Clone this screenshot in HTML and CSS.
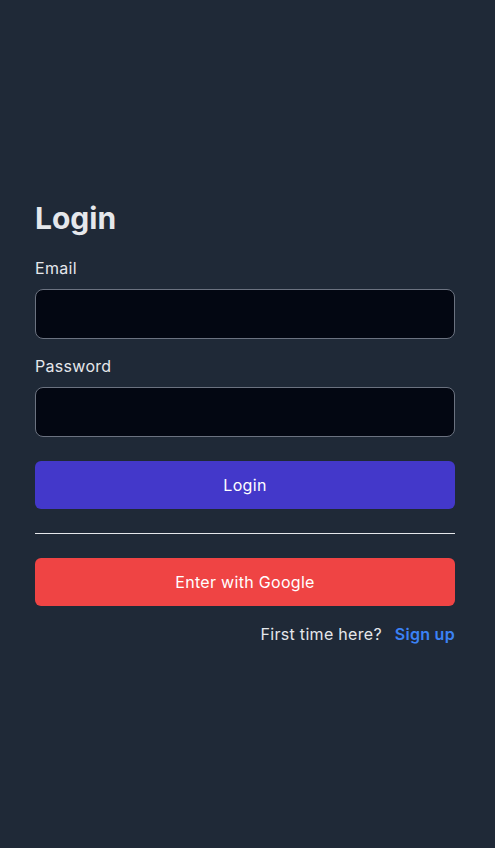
FILE: index.html
```html
<!DOCTYPE html>
<html lang="en">
<head>
<meta charset="utf-8">
<title>Login</title>
<link rel="stylesheet" href="styles.css">
</head>
<body>
<main class="page">
  <form class="card">
    <h1 class="title">Login</h1>
    <label class="label" for="email">Email</label>
    <input class="input" id="email" type="email">
    <label class="label label-gap" for="password">Password</label>
    <input class="input" id="password" type="password">
    <button class="btn btn-primary" type="button">Login</button>
    <hr class="divider">
    <button class="btn btn-google" type="button">Enter with Google</button>
    <p class="signup">First time here? <a class="signup-link" href="#">Sign up</a></p>
  </form>
</main>
</body>
</html>
```
FILE: styles.css
```css
* { box-sizing: border-box; }
html, body { margin: 0; padding: 0; }
body {
  background: #1f2937;
  font-family: "Inter", "Open Sans", sans-serif;
  color: #e5e7eb;
}
.page {
  min-height: 848px;
  display: flex;
  align-items: center;
  padding: 0 40px 3px 35px;
}
.card {
  width: 420px;
  display: flex;
  flex-direction: column;
  letter-spacing: 0.3px;
}
.title {
  margin: 0 0 20px;
  font-size: 30px;
  line-height: 36px;
  font-weight: 700;
  letter-spacing: 0;
  color: #e5e7eb;
}
.label {
  font-size: 16px;
  line-height: 24px;
  margin-bottom: 9px;
  color: #e5e7eb;
}
.label-gap { margin-top: 15px; }
.input {
  height: 50px;
  border: 1px solid #6b7280;
  border-radius: 8px;
  background: #030712;
  color: #e5e7eb;
  font: inherit;
  padding: 0 12px;
}
.btn {
  height: 48px;
  border: 0;
  border-radius: 6px;
  font: inherit;
  font-size: 16px;
  letter-spacing: 0.3px;
  color: #ffffff;
}
.btn-primary { background: #4338ca; margin-top: 24px; }
.btn-google { background: #ef4444; }
.divider {
  width: 100%;
  margin: 24px 0;
  border: 0;
  border-top: 1px solid #e5e7eb;
}
.signup {
  margin: 16px 0 0;
  text-align: right;
  font-size: 16px;
  line-height: 24px;
  color: #e5e7eb;
}
.signup-link {
  margin-left: 8px;
  color: #3b82f6;
  font-weight: 600;
  text-decoration: none;
}
```
